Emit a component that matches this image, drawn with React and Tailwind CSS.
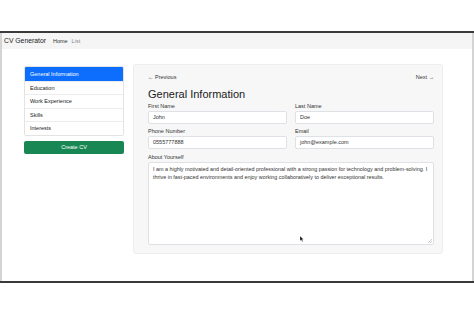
import React from 'react';

const steps = ['General Information', 'Education', 'Work Experience', 'Skills', 'Interests'];

function Field({ label, value }) {
  return (
    <div className="flex flex-col">
      <label className="text-[5.5px] leading-[7px] text-[#333] mb-[1px]">{label}</label>
      <div className="h-[13px] bg-white border border-[#dee2e6] rounded-[2px] px-[4px] flex items-center text-[5.5px] text-[#333]">
        {value}
      </div>
    </div>
  );
}

export default function App() {
  return (
    <div className="w-[474px] h-[316px] bg-white pt-[31px]" style={{ fontFamily: '"Liberation Sans", Arial, sans-serif' }}>
      <div className="h-[252px] border-t-2 border-b-2 border-[#3a3a3a] flex">
        <div className="flex-1 border-l-2 border-r-2 border-[#d4d4d4] flex flex-col">
          {/* navbar */}
          <div className="h-[16px] bg-[#f5f5f6] flex items-center px-[2px] gap-[7px]">
            <span className="text-[6.8px] text-[#222]">CV Generator</span>
            <div className="flex gap-[4px] text-[5.5px]">
              <span className="text-[#333]">Home</span>
              <span className="text-[#888]">List</span>
            </div>
          </div>

          <div className="flex pt-[15px] pl-[22px] gap-[9px]">
            {/* sidebar */}
            <div className="w-[100px] flex flex-col gap-[5px] pt-[2px]">
              <div className="border border-[#e3e3e3] rounded-[2px] overflow-hidden">
                {steps.map((s, i) => (
                  <div
                    key={s}
                    className={`h-[13.5px] flex items-center px-[5px] text-[5.5px] ${i === 0 ? 'bg-[#0d6efd] text-white' : 'bg-white text-[#222] border-t border-[#ececec]'}`}
                  >
                    {s}
                  </div>
                ))}
              </div>
              <div className="h-[13px] bg-[#198754] rounded-[2px] flex items-center justify-center text-[5.5px] text-white">
                Create CV
              </div>
            </div>

            {/* card */}
            <div className="w-[310px] h-[190px] bg-[#f7f7f8] rounded-[3px] border border-[#eeeeef] pl-[14px] pr-[8px] pt-[9px]">
              <div className="flex justify-between text-[5.5px] leading-[7px] text-[#333]">
                <span>← Previous</span>
                <span>Next →</span>
              </div>
              <h1 className="text-[11px] leading-[13px] text-[#1a1a1a] mt-[6.5px] font-medium">General Information</h1>
              <div className="grid grid-cols-2 gap-x-[8px] gap-y-[4px] mt-[2px]">
                <Field label="First Name" value="John" />
                <Field label="Last Name" value="Doe" />
                <Field label="Phone Number" value="0555777888" />
                <Field label="Email" value="john@example.com" />
              </div>
              <div className="mt-[5px] flex flex-col">
                <label className="text-[5.5px] leading-[7px] text-[#333] mb-[1px]">About Yourself</label>
                <div className="relative h-[83.5px] bg-white border border-[#dee2e6] rounded-[2px] px-[4px] pt-[2px] text-[5.4px] leading-[8px] text-[#333]">
                  I am a highly motivated and detail-oriented professional with a strong passion for technology and problem-solving. I thrive in fast-paced environments and enjoy working collaboratively to deliver exceptional results.
                  <svg className="absolute right-[1px] bottom-[1px]" width="4" height="4" viewBox="0 0 4 4">
                    <path d="M4 0 L0 4 M4 2 L2 4" stroke="#999" strokeWidth="0.5" />
                  </svg>
                  <svg className="absolute left-[151px] top-[73px]" width="4" height="6" viewBox="0 0 4 6">
                    <path d="M0 0 L0 5 L1.2 3.8 L2.2 5.8 L3 5.4 L2 3.5 L3.6 3.5 Z" fill="#111" stroke="#fff" strokeWidth="0.3" />
                  </svg>
                </div>
              </div>
            </div>
          </div>
        </div>
      </div>
    </div>
  );
}
